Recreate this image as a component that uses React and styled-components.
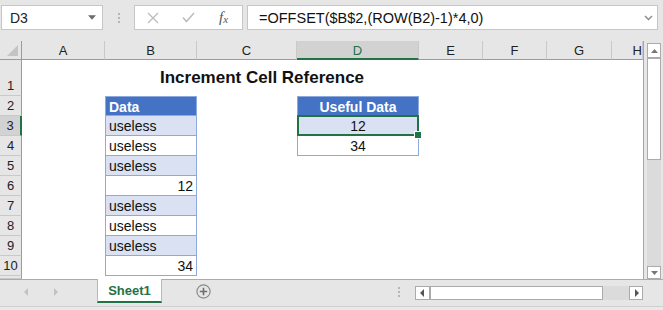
import React from 'react';
import styled, { createGlobalStyle, css } from 'styled-components';

const GREEN = '#217346';
const BLUE = '#4472c4';
const BAND = '#d9e1f2';
const LINE = '#8ea9db';

const GlobalStyle = createGlobalStyle`
  html, body { margin: 0; padding: 0; }
  body {
    width: 663px;
    height: 310px;
    overflow: hidden;
    background: #e6e6e6;
    font-family: "Liberation Sans", Arial, sans-serif;
  }
  * { box-sizing: border-box; }
`;

const Window = styled.div`
  width: 663px;
  height: 310px;
  display: flex;
  flex-direction: column;
  background: #e6e6e6;
`;

const FormulaBar = styled.div`
  height: 41px;
  display: flex;
  align-items: flex-start;
  padding: 5px 0 0 1px;
  flex-shrink: 0;
`;

const Box = styled.div`
  height: 25px;
  background: #fff;
  border: 1px solid #c6c6c6;
  display: flex;
  align-items: center;
`;

const NameBox = styled(Box)`
  width: 102px;
  padding: 0 6px 0 8px;
  justify-content: space-between;
  font-size: 14px;
  color: #222;
`;

const Grip = styled.div`
  width: 31px;
  height: 25px;
  display: flex;
  flex-direction: column;
  align-items: center;
  justify-content: center;
  gap: 2px;
  span {
    width: 2px;
    height: 2px;
    background: #b5b5b5;
  }
`;

const ButtonsBox = styled(Box)`
  width: 109px;
  margin-right: 4px;
  padding-left: 12px;
  gap: 23px;
`;

const Fx = styled.span`
  font-family: "Liberation Serif", "Times New Roman", serif;
  font-style: italic;
  font-size: 15px;
  color: #555;
  margin-left: 1px;
  sub {
    font-size: 11px;
    vertical-align: -1px;
  }
`;

const FormulaInput = styled(Box)`
  width: 411px;
  padding: 0 4px 0 11px;
  justify-content: space-between;
  font-size: 14.5px;
  color: #111;
`;

const SheetArea = styled.div`
  height: 238px;
  display: flex;
  flex-shrink: 0;
`;

const Grid = styled.div`
  width: 644px;
  display: grid;
  grid-template-columns: 22px 83px 92px 100px 122px 64px 64px 65px 31px;
  grid-template-rows: 19px 36px repeat(9, 20px) 3px;
  background: #fff;
  border-right: 1px solid #a6a6a6;
  overflow: hidden;
`;

const Corner = styled.div`
  background: #e6e6e6;
  border-right: 1px solid #9b9b9b;
  border-bottom: 1px solid #9b9b9b;
  display: flex;
  align-items: flex-end;
  justify-content: flex-end;
  padding: 0 3px 3px 0;
`;

const ColHead = styled.div`
  background: ${p => (p.$active ? '#d2d2d2' : '#e6e6e6')};
  color: ${p => (p.$active ? GREEN : '#222')};
  border-right: 1px solid #c9c9c9;
  border-bottom: ${p => (p.$active ? `2px solid ${GREEN}` : '1px solid #9b9b9b')};
  font-size: 13px;
  display: flex;
  align-items: center;
  justify-content: ${p => (p.$cut ? 'flex-end' : 'center')};
  padding-top: 1px;
  overflow: hidden;
  white-space: nowrap;
`;

const RowHead = styled.div`
  background: ${p => (p.$active ? '#d2d2d2' : '#e6e6e6')};
  border-right: ${p => (p.$active ? `2px solid ${GREEN}` : '1px solid #9b9b9b')};
  border-bottom: 1px solid #c9c9c9;
  font-size: 13px;
  color: #222;
  display: flex;
  align-items: flex-end;
  justify-content: center;
  padding-bottom: 2px;
  grid-column: 1;
`;

const Title = styled.div`
  grid-row: 2;
  grid-column: 3 / 6;
  display: flex;
  align-items: center;
  justify-content: center;
  font-weight: bold;
  font-size: 17px;
  color: #111;
`;

const variants = {
  head: css`
    background: ${BLUE};
    color: #fff;
    font-weight: bold;
    border-top: 1px solid ${LINE};
  `,
  band: css`
    background: ${BAND};
    color: #111;
  `,
  plain: css`
    background: #fff;
    color: #111;
  `,
};

const Cell = styled.div`
  grid-row: ${p => p.$row + 1};
  grid-column: ${p => p.$col};
  display: flex;
  align-items: center;
  justify-content: ${p => p.$align || 'flex-start'};
  padding: 1px 3px 0 3px;
  font-size: 14px;
  border-left: 1px solid ${LINE};
  border-right: 1px solid ${LINE};
  border-bottom: 1px solid ${LINE};
  position: relative;
  ${p => variants[p.$variant]};
  ${p =>
    p.$selected &&
    css`
      &::after {
        content: '';
        position: absolute;
        inset: -1px -1px -1px -1px;
        border: 2px solid ${GREEN};
      }
      &::before {
        content: '';
        position: absolute;
        right: -4px;
        bottom: -4px;
        width: 6px;
        height: 6px;
        background: ${GREEN};
        border: 1px solid #fff;
        z-index: 2;
      }
    `}
`;

const VScroll = styled.div`
  width: 14px;
  margin: 2px 0 0 3px;
  display: flex;
  flex-direction: column;
  background: #dbdbdb;
`;

const ArrowBtn = styled.div`
  width: ${p => p.$w || 14}px;
  height: ${p => p.$h || 14}px;
  background: #fff;
  border: 1px solid #ababab;
  display: flex;
  align-items: center;
  justify-content: center;
  flex-shrink: 0;
`;

const Thumb = styled.div`
  background: #fff;
  border: 1px solid #ababab;
  flex-shrink: 0;
  width: ${p => (p.$w ? `${p.$w}px` : 'auto')};
  height: ${p => (p.$h ? `${p.$h}px` : 'auto')};
`;

const Track = styled.div`
  flex: 1;
  background: #dbdbdb;
`;

const TabBar = styled.div`
  height: 24px;
  display: flex;
  align-items: stretch;
  border-top: 1px solid #ababab;
  flex-shrink: 0;
`;

const Nav = styled.div`
  width: 97px;
  display: flex;
  align-items: center;
  padding-left: 23px;
  gap: 22px;
`;

const SheetTab = styled.div`
  width: 65px;
  margin-top: -1px;
  background: #fff;
  border-left: 1px solid #b8b8b8;
  border-right: 1px solid #b8b8b8;
  border-bottom: 2px solid ${GREEN};
  color: ${GREEN};
  font-weight: bold;
  font-size: 13px;
  display: flex;
  align-items: center;
  justify-content: center;
  padding-top: 1px;
`;

const AddBtn = styled.div`
  width: 15px;
  display: flex;
  align-items: center;
  margin-left: 34px;
`;

const Dots = styled.div`
  margin-left: 187px;
  width: 2px;
  display: flex;
  flex-direction: column;
  justify-content: center;
  gap: 2px;
  span {
    width: 2px;
    height: 2px;
    background: #b5b5b5;
  }
`;

const HScroll = styled.div`
  margin: 6px 0 0 15px;
  height: 14px;
  width: 228px;
  display: flex;
  background: #dbdbdb;
`;

const StatusStrip = styled.div`
  margin-top: 3px;
  flex: 1;
  border-top: 1px solid #cfcfcf;
  background: #e9e9e9;
`;

const Tri = ({ dir, color = '#777', size = 7 }) => {
  const pts = {
    up: '0,6 7,6 3.5,2',
    down: '0,2 7,2 3.5,6',
    left: '5,0 5,8 1,4',
    right: '2,0 2,8 6,4',
  }[dir];
  return (
    <svg width={size} height={size + 1} viewBox="0 0 7 8">
      <polygon points={pts} fill={color} />
    </svg>
  );
};

const cols = ['A', 'B', 'C', 'D', 'E', 'F', 'G', 'H'];

const dataRows = [
  { r: 2, v: 'Data', variant: 'head' },
  { r: 3, v: 'useless', variant: 'band' },
  { r: 4, v: 'useless', variant: 'plain' },
  { r: 5, v: 'useless', variant: 'band' },
  { r: 6, v: '12', variant: 'plain', align: 'flex-end' },
  { r: 7, v: 'useless', variant: 'band' },
  { r: 8, v: 'useless', variant: 'plain' },
  { r: 9, v: 'useless', variant: 'band' },
  { r: 10, v: '34', variant: 'plain', align: 'flex-end' },
];

const usefulRows = [
  { r: 2, v: 'Useful Data', variant: 'head' },
  { r: 3, v: '12', variant: 'band', selected: true },
  { r: 4, v: '34', variant: 'plain' },
];

export default function App() {
  return (
    <Window>
      <GlobalStyle />
      <FormulaBar>
        <NameBox>
          <span>D3</span>
          <Tri dir="down" color="#6d6d6d" size={8} />
        </NameBox>
        <Grip>
          <span />
          <span />
          <span />
        </Grip>
        <ButtonsBox>
          <svg width="12" height="12" viewBox="0 0 12 12">
            <path d="M1 1 L11 11 M11 1 L1 11" stroke="#bdbdbd" strokeWidth="1.4" />
          </svg>
          <svg width="13" height="11" viewBox="0 0 13 11">
            <path d="M1 5.5 L4.5 9.5 L12 1" stroke="#bdbdbd" strokeWidth="1.6" fill="none" />
          </svg>
          <Fx>
            f<sub>x</sub>
          </Fx>
        </ButtonsBox>
        <FormulaInput>
          <span>=OFFSET($B$2,(ROW(B2)-1)*4,0)</span>
          <svg width="9" height="6" viewBox="0 0 9 6">
            <path d="M1 1 L4.5 4.5 L8 1" stroke="#8a8a8a" strokeWidth="1.4" fill="none" />
          </svg>
        </FormulaInput>
      </FormulaBar>

      <SheetArea>
        <Grid>
          <Corner>
            <svg width="11" height="11" viewBox="0 0 11 11">
              <polygon points="11,0 11,11 0,11" fill="#c4c4c4" />
            </svg>
          </Corner>
          {cols.map(c => (
            <ColHead key={c} $active={c === 'D'} $cut={c === 'H'}>
              {c}
            </ColHead>
          ))}
          {Array.from({ length: 10 }, (_, i) => (
            <RowHead key={i} $active={i + 1 === 3} style={{ gridRow: i + 2 }}>
              {i + 1}
            </RowHead>
          ))}
          <RowHead style={{ gridRow: 12 }} />
          <Title>Increment Cell Reference</Title>
          {dataRows.map(d => (
            <Cell key={`b${d.r}`} $row={d.r} $col={3} $variant={d.variant} $align={d.align}>
              {d.v}
            </Cell>
          ))}
          {usefulRows.map(d => (
            <Cell
              key={`d${d.r}`}
              $row={d.r}
              $col={5}
              $variant={d.variant}
              $align="center"
              $selected={d.selected}
            >
              {d.v}
            </Cell>
          ))}
        </Grid>
        <VScroll>
          <ArrowBtn $h={15}>
            <Tri dir="up" />
          </ArrowBtn>
          <Thumb $h={102} />
          <Track />
          <ArrowBtn $h={13}>
            <Tri dir="down" />
          </ArrowBtn>
        </VScroll>
      </SheetArea>

      <TabBar>
        <Nav>
          <Tri dir="left" color="#c2c2c2" />
          <Tri dir="right" color="#c2c2c2" />
        </Nav>
        <SheetTab>Sheet1</SheetTab>
        <AddBtn>
          <svg width="15" height="15" viewBox="0 0 15 15">
            <circle cx="7.5" cy="7.5" r="6.6" fill="none" stroke="#8a8a8a" strokeWidth="1.2" />
            <path d="M7.5 3.8 V11.2 M3.8 7.5 H11.2" stroke="#6d6d6d" strokeWidth="1.6" />
          </svg>
        </AddBtn>
        <Dots>
          <span />
          <span />
          <span />
        </Dots>
        <HScroll>
          <ArrowBtn $w={15}>
            <Tri dir="left" color="#555" />
          </ArrowBtn>
          <Thumb $w={173} />
          <Track />
          <ArrowBtn $w={14}>
            <Tri dir="right" color="#555" />
          </ArrowBtn>
        </HScroll>
      </TabBar>
      <StatusStrip />
    </Window>
  );
}
